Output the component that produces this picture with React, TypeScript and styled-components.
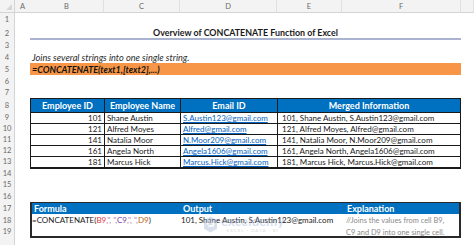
import React from "react";
import styled, { createGlobalStyle } from "styled-components";

const GlobalStyle = createGlobalStyle`
  html, body {
    margin: 0;
    padding: 0;
    background: #ffffff;
  }
  body {
    width: 474px;
    height: 245px;
    overflow: hidden;
    font-family: Lato, "Liberation Sans", sans-serif;
  }
`;

const COLUMNS = ["A", "B", "C", "D", "E", "F", ""];
const ROW_HEIGHTS = [13, 14, 11, 12, 12, 12, 11, 14, 11, 11, 11, 11, 11, 12, 11, 12, 12, 12, 11, 12];
const LABELLED_ROWS = 19;

const employees = [
  { id: 101, name: "Shane Austin", email: "S.Austin123@gmail.com" },
  { id: 121, name: "Alfred Moyes", email: "Alfred@gmail.com" },
  { id: 141, name: "Natalia Moor", email: "N.Moor209@gmail.com" },
  { id: 161, name: "Angela North", email: "Angela1606@gmail.com" },
  { id: 181, name: "Marcus Hick", email: "Marcus.Hick@gmail.com" },
];

const Sheet = styled.div`
  position: relative;
  display: grid;
  grid-template-columns: 15px 15px 74px 76px 97px 65px 119px 1fr;
  grid-template-rows: 13px ${ROW_HEIGHTS.map((h) => `${h}px`).join(" ")};
  width: 474px;
  height: 245px;
  overflow: hidden;
`;

const Corner = styled.div`
  grid-column: 1 / 3;
  grid-row: 1;
  display: flex;
  background: #f3f3f3;
  border-bottom: 1px solid #d4d4d4;
  box-sizing: border-box;
`;

const CornerBox = styled.div`
  position: relative;
  width: 15px;
  border-right: 1px solid #d4d4d4;
  box-sizing: border-box;
  &::after {
    content: "";
    position: absolute;
    right: 2px;
    bottom: 2px;
    border-left: 6px solid transparent;
    border-bottom: 6px solid #d6d6d6;
  }
`;

const ColHead = styled.div<{ $col: number }>`
  grid-column: ${({ $col }) => $col};
  grid-row: 1;
  display: flex;
  align-items: center;
  justify-content: center;
  background: #f3f3f3;
  border-bottom: 1px solid #d4d4d4;
  border-right: 1px solid #e0e0e0;
  box-sizing: border-box;
  font-size: 7.5px;
  color: #6a6a6a;
`;

const CornerLabel = styled(ColHead)`
  border-right: none;
  background: transparent;
  border-bottom: none;
`;

const RowHead = styled.div<{ $row: number }>`
  grid-column: 1;
  grid-row: ${({ $row }) => $row + 1};
  display: flex;
  align-items: center;
  justify-content: center;
  background: #f3f3f3;
  border-right: 1px solid #d4d4d4;
  box-sizing: border-box;
  font-size: 7.5px;
  color: #6a6a6a;
`;

const Title = styled.div`
  grid-column: 3 / 8;
  grid-row: 3;
  display: flex;
  align-items: center;
  justify-content: center;
  border-bottom: 2px solid #aab3cf;
  box-sizing: border-box;
  font-size: 8.9px;
  font-weight: 700;
  color: #1a1a1a;
`;

const Description = styled.div`
  grid-column: 3 / 8;
  grid-row: 5;
  display: flex;
  align-items: center;
  padding-left: 2px;
  font-size: 9.2px;
  font-style: italic;
  color: #2a2a2a;
`;

const SyntaxBand = styled.div`
  grid-column: 3 / 8;
  grid-row: 6;
  display: flex;
  align-items: center;
  padding-left: 2px;
  background: #f79646;
  font-size: 9px;
  font-style: italic;
  font-weight: 700;
  color: #111111;
`;

const DataTable = styled.div`
  grid-column: 3 / 8;
  grid-row: 9 / 15;
  align-self: start;
  display: grid;
  grid-template-columns: 73px 75px 96px 1fr;
  grid-template-rows: 13px repeat(5, 10px);
  gap: 1px;
  padding: 1px 1px 2px 1px;
  background: #1a1a1a;
`;

const HeadCell = styled.div<{ $align?: "left" | "center" }>`
  display: flex;
  align-items: center;
  justify-content: ${({ $align }) => ($align === "left" ? "flex-start" : "center")};
  padding: 0 2px;
  background: #0070c0;
  color: #ffffff;
  font-size: 9px;
  font-weight: 700;
  white-space: nowrap;
`;

const Cell = styled.div<{ $align?: "left" | "right"; $link?: boolean }>`
  display: flex;
  align-items: center;
  justify-content: ${({ $align }) => ($align === "right" ? "flex-end" : "flex-start")};
  padding: 0 2px;
  background: #ffffff;
  color: ${({ $link }) => ($link ? "#0563c1" : "#1a1a1a")};
  text-decoration: ${({ $link }) => ($link ? "underline" : "none")};
  font-size: 8px;
  white-space: nowrap;
  overflow: hidden;
`;

const SummaryTable = styled.div`
  grid-column: 3 / 8;
  grid-row: 18 / 21;
  align-self: start;
  display: grid;
  grid-template-columns: 149px 162px 1fr;
  grid-template-rows: 11px 12px 11px;
  height: 36px;
  border: 2px solid #2a2a2a;
  border-top: 1px solid #2a2a2a;
  box-sizing: border-box;
`;

const SummaryHead = styled(HeadCell)`
  justify-content: flex-start;
  padding-left: ${({ $align }) => ($align === "left" ? "2px" : "4px")};
`;

const SummaryCell = styled.div<{ $muted?: boolean; $rows?: number }>`
  grid-row: ${({ $rows }) => ($rows ? `span ${$rows}` : "auto")};
  padding: ${({ $muted }) => ($muted ? "1px 0 0 3px" : "0 2px 0 0")};
  font-size: ${({ $muted }) => ($muted ? "7.4px" : "8px")};
  line-height: ${({ $muted }) => ($muted ? "11.5px" : "12px")};
  color: ${({ $muted }) => ($muted ? "#8a8a8a" : "#1a1a1a")};
  white-space: nowrap;
  overflow: hidden;
`;

const Ref = styled.span<{ $color: string }>`
  color: ${({ $color }) => $color};
`;

const Watermark = styled.div`
  position: absolute;
  left: 203px;
  top: 215px;
  display: flex;
  align-items: center;
  gap: 3px;
  opacity: 0.4;
  pointer-events: none;
`;

const WatermarkText = styled.div`
  display: flex;
  flex-direction: column;
  align-items: center;
  color: #9fb0d4;
`;

const WatermarkName = styled.span`
  font-size: 13px;
  font-weight: 700;
  line-height: 13px;
  letter-spacing: 0.2px;
`;

const WatermarkTag = styled.span`
  font-size: 4.5px;
  line-height: 6px;
  letter-spacing: 1px;
  color: #a8a8a8;
`;

const Logo = () => (
  <svg width="15" height="17" viewBox="0 0 15 17">
    <path d="M7.5 0.5 L14 4.2 V12.8 L7.5 16.5 L1 12.8 V4.2 Z" fill="#9fb0d4" />
    <path d="M4.5 8.5 a3 3 0 1 1 5.6 1.5 H5.2" fill="none" stroke="#ffffff" strokeWidth="1.6" />
  </svg>
);

export default function App() {
  return (
    <>
      <GlobalStyle />
      <Sheet>
        <Corner>
          <CornerBox />
        </Corner>
        <CornerLabel $col={2}>A</CornerLabel>
        {COLUMNS.slice(1).map((c, i) => (
          <ColHead key={i} $col={i + 3}>
            {c}
          </ColHead>
        ))}
        {ROW_HEIGHTS.map((_, i) => (
          <RowHead key={i} $row={i + 1}>
            {i < LABELLED_ROWS ? i + 1 : ""}
          </RowHead>
        ))}

        <Title>Overview of CONCATENATE Function of Excel</Title>
        <Description>Joins several strings into one single string.</Description>
        <SyntaxBand>=CONCATENATE(text1,[text2],...)</SyntaxBand>

        <DataTable>
          <HeadCell>Employee ID</HeadCell>
          <HeadCell>Employee Name</HeadCell>
          <HeadCell>Email ID</HeadCell>
          <HeadCell>Merged Information</HeadCell>
          {employees.map((e) => (
            <React.Fragment key={e.id}>
              <Cell $align="right">{e.id}</Cell>
              <Cell>{e.name}</Cell>
              <Cell $link>{e.email}</Cell>
              <Cell>
                &nbsp;{e.id}, {e.name}, {e.email}
              </Cell>
            </React.Fragment>
          ))}
        </DataTable>

        <SummaryTable>
          <SummaryHead $align="left">Formula</SummaryHead>
          <SummaryHead $align="left">Output</SummaryHead>
          <SummaryHead>Explanation</SummaryHead>
          <SummaryCell>
            =CONCATENATE(<Ref $color="#e0393e">B9</Ref>
            <Ref $color="#b06fa0">,", ",</Ref>
            <Ref $color="#7b3fa6">C9</Ref>
            <Ref $color="#b06fa0">,", ",</Ref>
            <Ref $color="#b5651d">D9</Ref>)
          </SummaryCell>
          <SummaryCell>101, Shane Austin, S.Austin123@gmail.com</SummaryCell>
          <SummaryCell $muted $rows={2}>
            //Joins the values from cell B9,
            <br />
            C9 and D9 into one single cell.
          </SummaryCell>
          <SummaryCell />
          <SummaryCell />
        </SummaryTable>

        <Watermark>
          <Logo />
          <WatermarkText>
            <WatermarkName>exceldemy</WatermarkName>
            <WatermarkTag>EXCEL · DATA · BI</WatermarkTag>
          </WatermarkText>
        </Watermark>
      </Sheet>
    </>
  );
}
